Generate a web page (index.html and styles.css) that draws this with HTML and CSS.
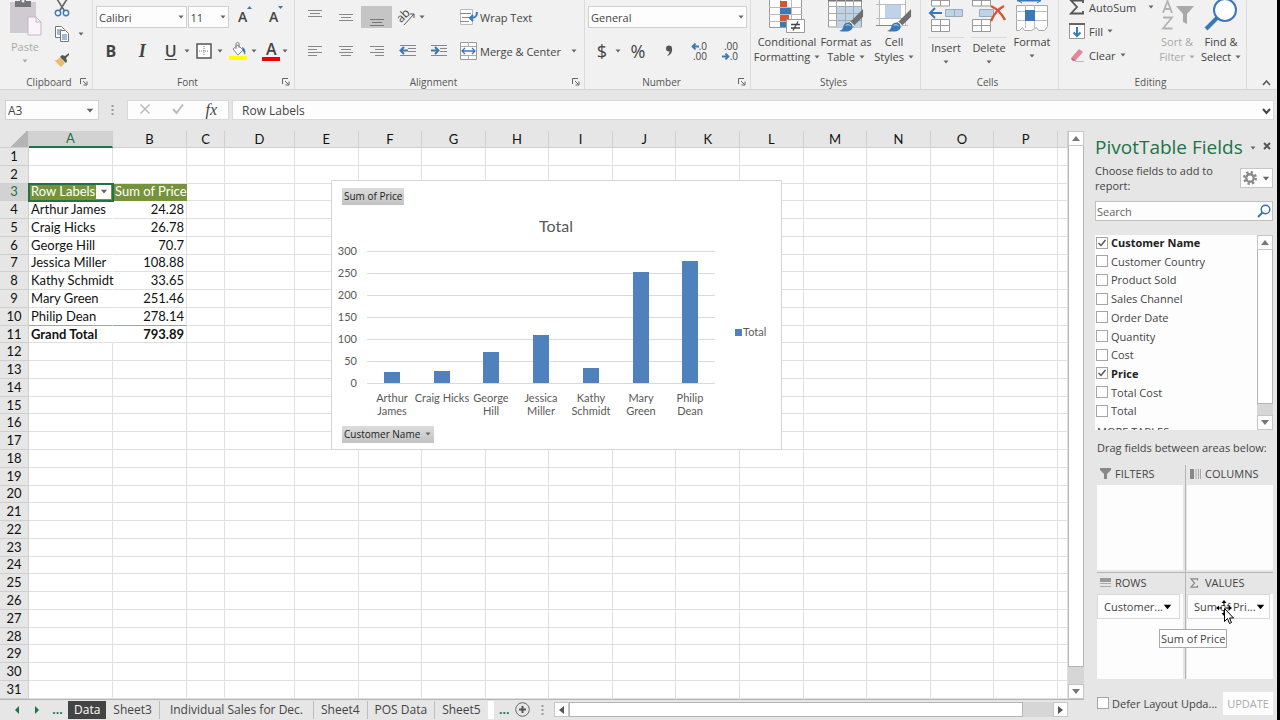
FILE: index.html
```html
<!DOCTYPE html>
<html lang="en">

<head>
    <meta charset="UTF-8">
    <meta name="viewport" content="width=device-width, initial-scale=1.0">
    <title>Pivot Chart</title>
    <link rel="stylesheet" href="styles.css">
</head>

<body>
    <svg class="defs" width="0" height="0" aria-hidden="true">
        <symbol id="caret" viewBox="0 0 6 4"><path d="M0.5 0.5h5L3 3.5z" fill="currentColor"/></symbol>
        <symbol id="launcher" viewBox="0 0 8 8"><path d="M0.5 6V0.5H6M3 3l3.5 3.5M7 3.5V7H3.5" fill="none" stroke="#666"/></symbol>
        <symbol id="brush" viewBox="0 0 26 26"><path d="M25 1v8l-9 9-4-4z" fill="#6f6f6f"/><path d="M12 14l4 4-2 2-4-4z" fill="#fff" stroke="#888" stroke-width=".6"/><path d="M10 15c3 0 5 3 4 6-2 4-8 4-14 3 4-1 4-3 5-6 1-2 3-3 5-3z" fill="#3b78b8"/><path d="M7 18c2-1 4-1 5 1" fill="none" stroke="#cfe0f2"/></symbol>
    </svg>

    <header class="ribbon">
        <section class="group clipboard">
            <div class="tools wide">
                <button class="big disabled paste">
                    <svg width="34" height="36" viewBox="0 0 34 36"><path d="M2 2h26v31H2z" fill="#cfcbd1"/><path d="M7 1h5V-2h6v3h5v6H7z" fill="#77757a"/><circle cx="15" cy="1" r="1.500" fill="#eee"/><path d="M20 17h8l5 5v13H20z" fill="#faf3fa" stroke="#c9b4c9"/><path d="M28 17v5h5" fill="none" stroke="#c9b4c9"/></svg>
                    <span>Paste</span>
                    <svg class="caret"><use href="#caret"/></svg>
                </button>
                <div class="stack">
                    <button aria-label="Cut"><svg width="16" height="18" viewBox="0 0 16 18"><path d="M3 0l7.500 12M13 0L5.500 12" stroke="#666" stroke-width="1.600" fill="none"/><circle cx="4" cy="14" r="2.700" fill="none" stroke="#3b78b8" stroke-width="1.400"/><circle cx="12" cy="14" r="2.700" fill="none" stroke="#3b78b8" stroke-width="1.400"/></svg></button>
                    <button aria-label="Copy"><svg width="16" height="18" viewBox="0 0 16 18"><path d="M1.500 1.500h6l3 3v8h-9z" fill="#fff" stroke="#777"/><path d="M3 5h5M3 7h5M3 9h3" stroke="#3b78b8"/><path d="M6.500 5.500h5l3 3v8h-8z" fill="#fff" stroke="#777"/><path d="M8 10h5M8 12h5M8 14h5" stroke="#3b78b8"/></svg><svg class="caret"><use href="#caret"/></svg></button>
                    <button aria-label="Format Painter"><svg width="16" height="14" viewBox="0 0 16 14"><path d="M15 0l-4 3-3-1-2 2 6 6 1-2-1-3 3-3z" fill="#555"/><path d="M6 4l5 6-4 4-7-7c3 1 4-1 6-3z" fill="#e8bd72"/></svg></button>
                </div>
            </div>
            <footer><span>Clipboard</span><svg class="launcher"><use href="#launcher"/></svg></footer>
        </section>

        <section class="group font">
            <div class="tools">
                <div class="row">
                    <select class="font-name" aria-label="Font"><option>Calibri</option></select>
                    <select class="font-size" aria-label="Font size"><option>11</option></select>
                    <button class="letter" aria-label="Increase font size">A<svg class="mark" width="5" height="3"><path d="M0 3L2.500 0 5 3z" fill="#3b78b8"/></svg></button>
                    <button class="letter" aria-label="Decrease font size">A<svg class="mark" width="5" height="3"><path d="M0 0h5L2.500 3z" fill="#3b78b8"/></svg></button>
                </div>
                <div class="row spaced">
                    <button class="glyph"><b>B</b></button>
                    <button class="glyph italic"><i>I</i></button>
                    <button class="split"><span class="ico glyph underline">U</span><svg class="caret"><use href="#caret"/></svg></button>
                    <button class="split" aria-label="Borders"><span class="ico"><svg width="16" height="16" viewBox="0 0 16 16"><rect x="1" y="1" width="14" height="14" fill="#fff" stroke="#555" stroke-width="1.500"/><path d="M8 3v10M3 8h10" stroke="#777" stroke-dasharray="1 1"/></svg></span><svg class="caret"><use href="#caret"/></svg></button>
                    <button class="split" aria-label="Fill color"><span class="ico"><svg width="18" height="18" viewBox="0 0 18 18"><path d="M4 7l5-4 5 5-5 5z" fill="#fff" stroke="#888"/><path d="M7 7V2c0-2 3-2 3 0v4" fill="none" stroke="#777"/><path d="M13 5c3 1 4 4 3 8l-2-4z" fill="#3b78b8"/><path d="M0 14h18v4H0z" fill="#ff0"/></svg></span><svg class="caret"><use href="#caret"/></svg></button>
                    <button class="split" aria-label="Font color"><span class="ico font-color">A</span><svg class="caret"><use href="#caret"/></svg></button>
                </div>
            </div>
            <footer><span>Font</span><svg class="launcher"><use href="#launcher"/></svg></footer>
        </section>

        <section class="group alignment">
            <div class="tools">
                <div class="cells">
                    <button aria-label="Top align"><svg width="16" height="22"><path d="M1 4.500h14M3 7.500h10M1 10.500h14" stroke="#888"/></svg></button>
                    <button aria-label="Middle align"><svg width="16" height="22"><path d="M1 8.500h14M3 11.500h10M1 14.500h14" stroke="#888"/></svg></button>
                    <button class="pressed" aria-label="Bottom align"><svg width="16" height="22"><path d="M1 13.500h14M3 16.500h10M1 19.500h14" stroke="#777"/></svg></button>
                    <button class="orient" aria-label="Orientation"><svg width="18" height="18" viewBox="0 0 18 18"><text x="-1" y="12" transform="rotate(-45 5 9)" font-size="12" fill="#444">ab</text><path d="M6 17L16 6M12 6h4v4" fill="none" stroke="#555"/></svg><svg class="caret"><use href="#caret"/></svg></button>
                    <button class="text-btn"><svg width="18" height="16" viewBox="0 0 18 16"><path d="M.5 .5h12v15H.5z" fill="#fff" stroke="#bbb"/><path d="M0 4.500h11M2 8.500h9M0 12.500h9" stroke="#888"/><path d="M17 3c0 5-2 6-6 6M13 6l-3 3 3 3" fill="none" stroke="#3b78b8" stroke-width="2"/></svg>Wrap Text</button>
                </div>
                <div class="cells">
                    <button aria-label="Align left"><svg width="16" height="14"><path d="M1 2.500h14M1 5.500h9M1 8.500h14M1 11.500h9" stroke="#888"/></svg></button>
                    <button aria-label="Center"><svg width="16" height="14"><path d="M1 2.500h14M3 5.500h10M1 8.500h14M3 11.500h10" stroke="#888"/></svg></button>
                    <button aria-label="Align right"><svg width="16" height="14"><path d="M1 2.500h14M6 5.500h9M1 8.500h14M6 11.500h9" stroke="#888"/></svg></button>
                    <button aria-label="Decrease indent"><svg width="18" height="14"><path d="M1 1.500h16M9 4.500h8M9 7.500h8M1 11.500h16" stroke="#888"/><path d="M9 6.500H2M5 3L1.500 6.500 5 10" fill="none" stroke="#3b78b8" stroke-width="2"/></svg></button>
                    <button aria-label="Increase indent"><svg width="18" height="14"><path d="M1 1.500h16M10 4.500h7M10 7.500h7M1 11.500h16" stroke="#888"/><path d="M1 6.500h7M5 3l3.500 3.500L5 10" fill="none" stroke="#3b78b8" stroke-width="2"/></svg></button>
                    <button class="text-btn"><svg width="18" height="18" viewBox="0 0 18 18"><path d="M.5 .5h16v17H.5z" fill="#fff" stroke="#999"/><path d="M.5 4.500h16M.5 13.500h16M8.500 0v4.500M8.500 13.500V18" stroke="#aaa"/><path d="M2 9h13M5 6L2 9l3 3M12 6l3 3-3 3" fill="none" stroke="#3b78b8" stroke-width="1.300"/></svg>Merge &amp; Center<svg class="caret far"><use href="#caret"/></svg></button>
                </div>
            </div>
            <footer><span>Alignment</span><svg class="launcher"><use href="#launcher"/></svg></footer>
        </section>

        <section class="group number">
            <div class="tools">
                <div class="row">
                    <select class="format" aria-label="Number format"><option>General</option></select>
                </div>
                <div class="row currency">
                    <button class="split"><span class="ico money">$</span><svg class="caret"><use href="#caret"/></svg></button>
                    <button class="money">%</button>
                    <button aria-label="Comma style"><svg width="8" height="12" viewBox="0 0 8 12"><circle cx="4" cy="3.500" r="3" fill="#555"/><path d="M7 3c.5 4-1 7-5 8 2-2 3-4 2.500-6z" fill="#555"/></svg></button>
                    <button class="decimals"><span><svg width="8" height="7"><path d="M8 3.500H2M4.500 .5l-3 3 3 3" fill="none" stroke="#3b78b8" stroke-width="1.800"/></svg>.0</span><span>.00</span></button>
                    <button class="decimals"><span>.00</span><span><svg width="8" height="7"><path d="M0 3.500h6M3.500 .5l3 3-3 3" fill="none" stroke="#3b78b8" stroke-width="1.800"/></svg>.0</span></button>
                </div>
            </div>
            <footer><span>Number</span><svg class="launcher"><use href="#launcher"/></svg></footer>
        </section>

        <section class="group styles">
            <div class="tools wide">
                <button class="big">
                    <svg width="36" height="34" viewBox="0 0 36 34"><path d="M.5 -5h32v32.500H.5z" fill="#fff" stroke="#999"/><path d="M0 7.500h33M0 14.500h33M0 21.500h33M11.500 0v27M22.500 0v27" stroke="#bbb"/><path d="M11 1h7v6h-7zM11 15h9v6h-9z" fill="#d65532"/><path d="M11 8h11v6H11zM11 22h6v5h-6z" fill="#3b78b8"/><path d="M17.500 19.500h18v13h-18z" fill="#fff" stroke="#999"/><path d="M22 24.500h9M22 28h9M29 21.500l-5 9" stroke="#444" stroke-width="1.300"/></svg>
                    <span>Conditional<br>Formatting <svg class="caret"><use href="#caret"/></svg></span>
                </button>
                <button class="big">
                    <svg width="36" height="34" viewBox="0 0 36 34"><path d="M.5 -5h33v32H.5z" fill="#fff" stroke="#999"/><path d="M9 6h24v21H9z" fill="#bdd3ea"/><path d="M0 0.500h34" stroke="#777" stroke-width="2"/><path d="M0 6.500h33M0 13.500h33M0 20.500h33M8.500 0v27M17.500 0v27M25.500 0v27" stroke="#aaa"/><use href="#brush" x="11" y="8" width="25" height="25"/></svg>
                    <span>Format as<br>Table <svg class="caret"><use href="#caret"/></svg></span>
                </button>
                <button class="big">
                    <svg width="36" height="34" viewBox="0 0 36 34"><path d="M3 0h26v25H3z" fill="#fff"/><path d="M9 5h16v13H9z" fill="#bdd3ea"/><path d="M3.500 0v26M0 25.500h32M0 4.500h29M0 18.500h29M29.500 0v25" stroke="#bbb"/><path d="M0 25.500h22" stroke="#888"/><use href="#brush" x="11" y="8" width="25" height="25"/></svg>
                    <span>Cell<br>Styles <svg class="caret"><use href="#caret"/></svg></span>
                </button>
            </div>
            <footer><span>Styles</span></footer>
        </section>

        <section class="group cellops">
            <div class="tools wide">
                <button class="big two-part">
                    <svg width="36" height="34" viewBox="0 0 36 34"><path d="M3.500 -4h18v10h-18zM3.500 19.500h18v12h-18z" fill="#fff" stroke="#999"/><path d="M3 .5h18M12.500 0v6M3 25.500h18M12.500 19v13" stroke="#999"/><path d="M17.500 9.500h17v7h-17z" fill="#bdd3ea" stroke="#9ab"/><path d="M26.500 9v8" stroke="#9ab"/><path d="M14 13H2M7 8l-5 5 5 5" fill="none" stroke="#3b78b8" stroke-width="2"/></svg>
                    <span>Insert</span>
                    <svg class="caret"><use href="#caret"/></svg>
                </button>
                <button class="big two-part">
                    <svg width="36" height="34" viewBox="0 0 36 34"><path d="M1.500 -4h18v10h-18zM1.500 19.500h18v12h-18z" fill="#fff" stroke="#999"/><path d="M1 .5h18M10.500 0v6M1 25.500h18M10.500 19v13" stroke="#999"/><path d="M8.500 9.500h14v7h-14z" fill="#bdd3ea" stroke="#9ab"/><path d="M20 6c6 3 11 8 14 14M33 6c-6 3-10 8-13 15" fill="none" stroke="#d65532" stroke-width="2.500"/></svg>
                    <span>Delete</span>
                    <svg class="caret"><use href="#caret"/></svg>
                </button>
                <button class="big">
                    <svg width="36" height="34" viewBox="0 0 36 34"><path d="M3 .5h24" stroke="#3b78b8" stroke-width="2"/><path d="M8 -2L5 1l3 2M23 -2l3 3-3 2" fill="none" stroke="#3b78b8"/><path d="M2.500 5.500h31v21l-3 4h-6l-2-3-5 3h-7l-2-3-3 3h-3z" fill="#fff" stroke="#aaa"/><path d="M2 11.500h31M2 20.500h31M11.500 5v23M20.500 5v23" stroke="#bbb"/><path d="M11 10h10v11H11z" fill="#3b78b8"/></svg>
                    <span>Format</span>
                    <svg class="caret"><use href="#caret"/></svg>
                </button>
            </div>
            <footer><span>Cells</span></footer>
        </section>

        <section class="group editing">
            <div class="tools wide">
                <div class="stack labelled">
                    <button><svg width="16" height="16" viewBox="0 0 16 16"><path d="M14 4V1.500H2L8 8l-6 6.500h12V12" fill="none" stroke="#555" stroke-width="1.800"/></svg>AutoSum<svg class="caret far"><use href="#caret"/></svg></button>
                    <button><svg width="16" height="16" viewBox="0 0 16 16"><path d="M.5 .5h15v15H.5z" fill="#fff" stroke="#999"/><path d="M0 1h16" stroke="#666" stroke-width="2"/><path d="M8 4v9M4.500 9.500L8 13l3.500-3.500" fill="none" stroke="#3b78b8" stroke-width="2"/></svg>Fill<svg class="caret"><use href="#caret"/></svg></button>
                    <button><svg width="16" height="16" viewBox="0 0 16 16"><path d="M10 2l4 3-7 8-4-3z" fill="#e7849c"/><path d="M3 10l4 3-1 1H4l-2-2z" fill="#d46a84"/><path d="M6 14.500h9" stroke="#bbb"/></svg>Clear<svg class="caret"><use href="#caret"/></svg></button>
                </div>
                <button class="big disabled">
                    <svg width="36" height="34" viewBox="0 0 36 34"><path d="M4 13L8.500 1 13 13M6 9h5M4 17.500h9L4 28.500h9.500" fill="none" stroke="#b3b3b3" stroke-width="1.800"/><path d="M17 6h18l-7 8v10l-4-2v-8z" fill="#a9a9a9"/></svg>
                    <span>Sort &amp;<br>Filter <svg class="caret"><use href="#caret"/></svg></span>
                </button>
                <button class="big">
                    <svg width="36" height="34" viewBox="0 0 36 34"><circle cx="22" cy="10" r="11" fill="#fff" stroke="#3b78b8" stroke-width="2"/><path d="M14 18L3 29" stroke="#3b78b8" stroke-width="4"/></svg>
                    <span>Find &amp;<br>Select <svg class="caret"><use href="#caret"/></svg></span>
                </button>
            </div>
            <footer><span>Editing</span></footer>
        </section>
        <button class="collapse" aria-label="Collapse the ribbon"><svg width="9" height="6"><path d="M1 5l3.500-4L8 5" fill="none" stroke="#555" stroke-width="1.500"/></svg></button>
    </header>

    <div class="formula-bar">
        <select class="name-box" aria-label="Name box"><option>A3</option></select>
        <svg class="dots" width="3" height="12"><path d="M1.500 1v10" stroke="#999" stroke-width="2" stroke-dasharray="2 2"/></svg>
        <div class="fx-box">
            <button aria-label="Cancel"><svg width="12" height="12"><path d="M1.500 1.500l9 9M10.500 1.500l-9 9" stroke="#bbb" stroke-width="1.500"/></svg></button>
            <button aria-label="Enter"><svg width="12" height="12"><path d="M1 6l3.500 4L11 1.500" fill="none" stroke="#bbb" stroke-width="2"/></svg></button>
            <button class="fx">fx</button>
        </div>
        <div class="formula">
            <input type="text" value="Row Labels" aria-label="Formula">
            <button aria-label="Expand formula bar"><svg width="9" height="7"><path d="M1 1l3.500 4L8 1" fill="none" stroke="#444" stroke-width="2"/></svg></button>
        </div>
    </div>

    <main>
        <div class="workbook">
            <div class="sheet-area">
                <div class="sheet">
                    <table>
                        <colgroup>
                            <col class="col-num"><col class="col-a"><col class="col-b"><col class="col-c"><col class="col-d">
                            <col span="12">
                            <col class="col-last">
                        </colgroup>
                        <thead id="columns"></thead>
                        <tbody id="rows"></tbody>
                    </table>

                    <figure class="chart">
                        <button class="field-button">Sum of Price</button>
                        <svg viewBox="0 0 447 212" role="img" aria-label="Total by customer">
                            <text class="chart-title" x="223" y="22">Total</text>
                            <g id="plot"></g>
                            <rect class="bar" x="402" y="119" width="7" height="7"/>
                            <text x="410" y="126">Total</text>
                        </svg>
                        <button class="field-button">Customer Name <svg class="caret"><use href="#caret"/></svg></button>
                    </figure>
                </div>
                <div class="scroll vertical">
                    <button aria-label="Scroll up"><svg width="8" height="5"><path d="M0 5l4-5 4 5z" fill="#777"/></svg></button>
                    <div class="thumb"></div>
                    <button aria-label="Scroll down"><svg width="8" height="5"><path d="M0 0h8L4 5z" fill="#777"/></svg></button>
                </div>
            </div>

            <nav class="tabs">
                <button class="arrow" aria-label="Previous sheet"><svg width="4" height="8"><path d="M4 0v8L0 4z" fill="#217346"/></svg></button>
                <button class="arrow" aria-label="Next sheet"><svg width="4" height="8"><path d="M0 0v8l4-4z" fill="#217346"/></svg></button>
                <button class="more">...</button>
                <button class="tab active">Data</button>
                <button class="tab">Sheet3</button>
                <button class="tab long">Individual Sales for Dec.</button>
                <button class="tab">Sheet4</button>
                <button class="tab">POS Data</button>
                <button class="tab last">Sheet5</button>
                <button class="more">...</button>
                <button class="add" aria-label="New sheet"><svg width="15" height="15"><circle cx="7.500" cy="7.500" r="6.800" fill="none" stroke="#666"/><path d="M7.500 4v7M4 7.500h7" stroke="#555" stroke-width="2"/></svg></button>
                <svg class="dots" width="3" height="12"><path d="M1.500 1v10" stroke="#999" stroke-width="2" stroke-dasharray="2 2"/></svg>
                <div class="scroll horizontal">
                    <button aria-label="Scroll left"><svg width="5" height="8"><path d="M5 0v8L0 4z" fill="#555"/></svg></button>
                    <div class="thumb"></div>
                    <button aria-label="Scroll right"><svg width="5" height="8"><path d="M0 0v8l5-4z" fill="#555"/></svg></button>
                </div>
            </nav>
        </div>

        <aside class="pane">
            <div class="pane-title">
                <h1>PivotTable Fields</h1>
                <button aria-label="Pane options"><svg class="caret"><use href="#caret"/></svg></button>
                <button aria-label="Close"><svg width="8" height="8"><path d="M1 1l6 6M7 1L1 7" stroke="#555" stroke-width="2"/></svg></button>
            </div>
            <div class="choose">
                <p>Choose fields to add to report:</p>
                <button class="gear" aria-label="Tools"><svg width="14" height="14" viewBox="0 0 12 12"><circle cx="6" cy="6" r="5" fill="none" stroke="#888" stroke-width="2" stroke-dasharray="2 1.927"/><circle cx="6" cy="6" r="3.200" fill="none" stroke="#888" stroke-width="2"/></svg><svg class="caret"><use href="#caret"/></svg></button>
            </div>
            <div class="search">
                <input type="text" placeholder="Search" aria-label="Search fields">
                <svg width="14" height="14" viewBox="0 0 14 14"><circle cx="8.500" cy="5.500" r="4.300" fill="#fff" stroke="#3b6fae" stroke-width="1.400"/><path d="M5.500 8.500L1 13" stroke="#3b6fae" stroke-width="1.800"/></svg>
            </div>
            <div class="field-list">
                <div class="fields">
                    <ul>
                        <li><label class="used"><input type="checkbox" checked>Customer Name</label></li>
                        <li><label><input type="checkbox">Customer Country</label></li>
                        <li><label><input type="checkbox">Product Sold</label></li>
                        <li><label><input type="checkbox">Sales Channel</label></li>
                        <li><label><input type="checkbox">Order Date</label></li>
                        <li><label><input type="checkbox">Quantity</label></li>
                        <li><label><input type="checkbox">Cost</label></li>
                        <li><label class="used"><input type="checkbox" checked>Price</label></li>
                        <li><label><input type="checkbox">Total Cost</label></li>
                        <li><label><input type="checkbox">Total</label></li>
                    </ul>
                    <a class="more-tables" href="#">MORE TABLES</a>
                </div>
                <div class="scroll vertical">
                    <button aria-label="Scroll up"><svg width="8" height="5"><path d="M0 5l4-5 4 5z" fill="#777"/></svg></button>
                    <div class="thumb"></div>
                    <button aria-label="Scroll down"><svg width="8" height="5"><path d="M0 0h8L4 5z" fill="#777"/></svg></button>
                </div>
            </div>
            <p class="hint">Drag fields between areas below:</p>
            <div class="areas">
                <section>
                    <h2><svg width="11" height="11"><path d="M0 0h11v2L7 6v5H4V6L0 2z" fill="#888"/></svg>FILTERS</h2>
                    <div class="drop"></div>
                </section>
                <section>
                    <h2><svg width="11" height="10"><path d="M0 0h4v10H0z" fill="#888"/><path d="M6 0v10M8.500 0v10M10.500 0v10" stroke="#aaa"/></svg>COLUMNS</h2>
                    <div class="drop"></div>
                </section>
                <section>
                    <h2><svg width="11" height="9"><path d="M0 0h11v4H0z" fill="#999"/><path d="M0 5.500h11M0 8.500h11" stroke="#aaa"/></svg>ROWS</h2>
                    <div class="drop"><button class="pill">Customer...<svg class="caret"><use href="#caret"/></svg></button></div>
                </section>
                <section class="values">
                    <h2><svg width="11" height="10" viewBox="0 0 11 10"><path d="M7.500 2.500V.8H1L4.500 5 1 9.200h6.500V7.500" fill="none" stroke="#888" stroke-width="1.200"/></svg>VALUES</h2>
                    <div class="drop"><button class="pill">Sum of Pri...<svg class="caret"><use href="#caret"/></svg></button></div>
                    <div class="tooltip">Sum of Price</div>
                    <svg class="cursor" width="18" height="26" viewBox="0 0 18 26"><path d="M8 1v14M1 8h14" stroke="#000" stroke-dasharray="5 4"/><path d="M8 0l2.500 3h-5zM8 16l2.500-3h-5zM0 8l3-2.500v5zM16 8l-3-2.500v5z" fill="#000"/><path d="M8.500 8.500v13l3-3 2 5 2-1-2-4.500h4z" fill="#fff" stroke="#000"/></svg>
                </section>
            </div>
            <div class="pane-footer">
                <label><input type="checkbox">Defer Layout Upda...</label>
                <button disabled>UPDATE</button>
            </div>
        </aside>
    </main>

    <script>
        const columns = 'ABCDEFGHIJKLMNOP'.split('');
        const customers = [
            ['Arthur James', 24.28],
            ['Craig Hicks', 26.78],
            ['George Hill', 70.7],
            ['Jessica Miller', 108.88],
            ['Kathy Schmidt', 33.65],
            ['Mary Green', 251.46],
            ['Philip Dean', 278.14]
        ];

        // column letters
        let head = '<tr><th class="corner"></th>';
        columns.forEach(c => head += `<th class="${c === 'A' ? 'selected' : ''}">${c}</th>`);
        document.getElementById('columns').innerHTML = head + '<th></th></tr>';

        // sheet rows, the pivot table starts on row 3
        function pivotCells(row) {
            if (row === 3) {
                return '<td class="pivot-head current"><span>Row Labels</span><button aria-label="Filter"><svg class="caret"><use href="#caret"/></svg></button></td><td class="pivot-head">Sum of Price</td>';
            }
            if (row > 3 && row < 11) {
                const [name, price] = customers[row - 4];
                const cls = row === 10 ? ' last' : '';
                return `<td class="pivot${cls}">${name}</td><td class="pivot num${cls}">${price}</td>`;
            }
            if (row === 11) return '<td class="total">Grand Total</td><td class="total num">793.89</td>';
            return '<td></td><td></td>';
        }

        let body = '';
        for (let r = 1; r <= 31; r++) {
            body += `<tr><th class="${r === 3 ? 'selected' : ''}">${r}</th>${pivotCells(r)}${'<td></td>'.repeat(15)}</tr>`;
        }
        document.getElementById('rows').innerHTML = body;

        // chart
        const base = 173;
        const scale = 132 / 300;
        let plot = '';
        for (let v = 0; v <= 300; v += 50) {
            const y = Math.round(base - v * scale);
            plot += `<path class="grid-line" d="M34 ${y}.5H382"/><text class="axis" x="24" y="${y + 4}">${v}</text>`;
        }
        customers.forEach(([name, price], i) => {
            const x = Math.round(59 + i * 49.7);
            const h = Math.round(price * scale);
            plot += `<rect class="bar" x="${x - 8}" y="${base - h}" width="16" height="${h}"/>`;
            const lines = name === 'Craig Hicks' ? [name] : name.split(' ');
            lines.forEach((t, n) => plot += `<text class="category" x="${x}" y="${base + 19 + n * 13}">${t}</text>`);
        });
        document.getElementById('plot').innerHTML = plot;
    </script>
</body>

</html>
```
FILE: styles.css
```css
* {
    box-sizing: border-box;
}

body {
    margin: 0;
    height: 100vh;
    display: flex;
    flex-direction: column;
    overflow: hidden;
    border-right: 3px solid #000;
    background: #e6e6e6;
    color: #444;
    font-family: "Open Sans", "Noto Sans", sans-serif;
    font-size: 12px;
}

button,
input,
select {
    font: inherit;
    color: inherit;
    margin: 0;
    padding: 0;
    border: 0;
    border-radius: 0;
    background: none;
}

svg {
    flex: none;
}

.defs {
    position: absolute;
}

.caret {
    width: 6px;
    height: 4px;
    color: #666;
}

/* ribbon */
.ribbon {
    flex: none;
    display: flex;
    height: 90px;
    background: #f1f1f1;
    border-bottom: 1px solid #d4d4d4;
    font-size: 11px;
}

.group {
    display: flex;
    flex-direction: column;
    flex: none;
    border-right: 1px solid #dcdcdc;
}

.clipboard { width: 93px; }
.font { width: 202px; }
.alignment { width: 290px; }
.number { width: 166px; }
.styles { width: 170px; }
.cellops { width: 138px; }
.editing { width: 188px; }

.group footer {
    display: flex;
    align-items: center;
    height: 14px;
    padding-right: 4px;
    font-size: 10px;
    line-height: 14px;
    color: #555;
}

.group footer span {
    flex: 1;
    text-align: center;
}

.clipboard footer {
    padding-left: 18px;
}

.launcher {
    width: 8px;
    height: 8px;
}

.tools {
    display: flex;
    flex-direction: column;
    gap: 12px;
    height: 75px;
    padding: 6px 3px 0;
}

.tools.wide {
    flex-direction: row;
    gap: 0;
    padding: 0;
}

.tools button {
    display: flex;
    align-items: center;
    justify-content: center;
}

.row {
    display: flex;
    gap: 1px;
    height: 22px;
}

.row button {
    width: 30px;
}

.row.spaced {
    gap: 2px;
}

.row.currency {
    padding-left: 2px;
}

select {
    appearance: none;
    height: 22px;
    padding: 0 2px;
    border: 1px solid #d0d0d0;
    background: #fdfdfd url('data:image/svg+xml,<svg xmlns="http://www.w3.org/2000/svg" width="6" height="4"><path d="M.5 .5h5L3 3.500z" fill="%23666"/></svg>') no-repeat right 2px center;
}

.font-name { width: 91px; }
.font-size { width: 42px; }

.format {
    flex: 1;
}

.row .letter {
    align-items: flex-start;
    font-size: 14px;
    font-weight: 600;
    line-height: 22px;
}

.glyph {
    font-size: 16px;
}

.italic {
    font-family: "Liberation Serif", serif;
    font-size: 18px;
    font-weight: bold;
}

.underline {
    font-weight: 600;
    text-decoration: underline;
    text-underline-offset: 2px;
}

.row .split {
    width: 32px;
}

.ico {
    display: flex;
    justify-content: center;
    align-items: center;
    width: 22px;
    margin-right: 2px;
}

.font-color {
    width: 18px;
    height: 19px;
    font-size: 16px;
    font-weight: 600;
    border-bottom: 4px solid #e00;
}

.cells {
    display: grid;
    grid-template-columns: repeat(5, 31px) 1fr;
    height: 22px;
    padding-left: 1px;
}

.pressed {
    background: #c5c5c5;
}

.cells .orient {
    grid-column: span 2;
    justify-self: start;
    gap: 3px;
    padding-left: 6px;
}

.orient svg {
    overflow: visible;
}

.alignment .text-btn {
    justify-content: flex-start;
    gap: 2px;
    padding-left: 6px;
    white-space: nowrap;
}

.far {
    margin-left: 8px;
}

.money {
    font-size: 18px;
}

.row .decimals {
    flex-direction: column;
    align-items: flex-end;
    padding-right: 8px;
    font-size: 10px;
    line-height: 10px;
}

.big {
    flex-direction: column;
    flex: none;
    line-height: 15px;
    white-space: nowrap;
}

.tools .big {
    justify-content: flex-start;
}

.styles .tools {
    padding: 0 3px;
}

.styles .big:nth-child(1) { width: 66px; }
.styles .big:nth-child(2) { width: 52px; }
.styles .big:nth-child(3) { width: 44px; }

.big .caret {
    margin-top: 5px;
}

.big span .caret {
    margin: 0 0 2px 1px;
}

.cellops .tools {
    padding: 0 4px;
    gap: 1px;
}

.cellops .big {
    width: 42px;
}

.two-part span {
    width: 36px;
    margin-top: 3px;
    padding-top: 2px;
    border-top: 1px solid #dadada;
}

.paste {
    width: 50px;
}

.paste span {
    margin-top: 3px;
}

.disabled,
.disabled .caret {
    color: #aaa;
}

.stack {
    display: flex;
    flex-direction: column;
    justify-content: flex-end;
    height: 73px;
    overflow: hidden;
}

.stack button {
    flex: none;
    justify-content: flex-start;
    gap: 8px;
    height: 26px;
    padding-left: 4px;
}

.labelled {
    width: 96px;
    height: 67px;
}

.labelled button {
    gap: 4px;
    height: 24px;
    padding-left: 10px;
}

.editing .big {
    width: 44px;
}

.collapse {
    align-self: flex-end;
    width: 30px;
    height: 16px;
    padding-left: 8px;
}

/* formula bar */
.formula-bar {
    flex: none;
    display: flex;
    align-items: center;
    height: 41px;
    padding: 0 3px 1px 5px;
}

.name-box {
    width: 94px;
    height: 20px;
    background-position: right 4px center;
    background-size: 8px 5px;
}

.formula-bar .dots {
    margin: 0 13px 0 12px;
}

.fx-box {
    display: flex;
    width: 102px;
    height: 20px;
    margin-right: 3px;
    background: #fdfdfd;
    border: 1px solid #d9d9d9;
}

.fx-box button {
    flex: 1;
}

.fx {
    font-family: "Liberation Serif", serif;
    font-size: 16px;
    font-style: italic;
    line-height: 16px;
}

.formula {
    flex: 1;
    display: flex;
    height: 20px;
    background: #fdfdfd;
    border: 1px solid #d9d9d9;
}

.formula input {
    flex: 1;
    padding: 0 9px;
}

.formula button {
    width: 14px;
}

/* sheet */
main {
    flex: 1;
    display: flex;
    min-height: 0;
}

.workbook {
    flex: 1;
    display: flex;
    flex-direction: column;
    min-width: 0;
}

.sheet-area {
    flex: 1;
    display: flex;
    min-height: 0;
}

.sheet {
    position: relative;
    flex: 1;
    min-width: 0;
    background: #fff;
}

table {
    width: 100%;
    height: 100%;
    table-layout: fixed;
    border-spacing: 0;
    font-family: Lato, "Open Sans", sans-serif;
    font-size: 13px;
    line-height: 15px;
    color: #111;
}

.col-num { width: 29px; }
.col-a { width: 84px; }
.col-b { width: 74px; }
.col-c { width: 38px; }
.col-d { width: 70px; }
.col-last { width: 10px; }

th,
td {
    padding: 0 2px;
    border-right: 1px solid #e0e0e0;
    border-bottom: 1px solid #e0e0e0;
    white-space: nowrap;
}

th {
    padding: 0;
    font-weight: normal;
    background: #e6e6e6;
    border-color: #cfcfcf;
}

thead th {
    height: 17px;
}

.corner {
    background: linear-gradient(135deg, #e6e6e6 60%, #b5b5b5 60%);
}

.selected {
    background: #d2d2d2;
    color: #217346;
}

thead .selected {
    border-bottom: 2px solid #217346;
}

.pivot-head {
    padding: 0 1px 0 2px;
    background: #76933c;
    color: #fff;
    border-color: #76933c;
}

.current {
    position: relative;
    outline: 2px solid #217346;
    outline-offset: -1px;
}

.current button {
    position: absolute;
    top: 1px;
    right: 1px;
    bottom: 1px;
    width: 15px;
    background: #fff;
    line-height: 8px;
}

.current .caret,
.gear .caret {
    width: 8px;
    height: 5px;
}

.current .caret {
    margin-bottom: 2px;
}

.pivot,
.total {
    border-right-color: #fff;
}

.num {
    text-align: right;
    border-right-color: #e0e0e0;
}

.last {
    border-bottom-color: #9bb36c;
}

.total {
    font-weight: bold;
}

/* chart floats over the cells */
.chart {
    position: absolute;
    left: 331px;
    top: 49px;
    width: 451px;
    height: 270px;
    margin: 0;
    padding: 7px 1px 6px;
    display: flex;
    flex-direction: column;
    align-items: flex-start;
    justify-content: space-between;
    background: #fff;
    border: 1px solid #d6d6d6;
    font-family: Lato, "Open Sans", sans-serif;
}

.chart > svg {
    width: 100%;
    height: 212px;
    font-size: 11px;
    fill: #595959;
}

.chart-title {
    font-size: 16px;
    text-anchor: middle;
}

.grid-line {
    stroke: #d9d9d9;
}

.axis {
    text-anchor: end;
}

.category {
    text-anchor: middle;
}

.bar {
    fill: #4f81bd;
}

.field-button {
    height: 17px;
    margin-left: 9px;
    padding: 0 2px;
    background: linear-gradient(#dcdcdc, #c2c2c2);
    font-family: "Open Sans", sans-serif;
    font-size: 10px;
    line-height: 17px;
    color: #222;
}

.field-button .caret {
    margin: 0 1px 2px 2px;
}

/* scroll bars */
.scroll {
    display: flex;
    background: #d6d6d6;
}

.scroll button {
    display: flex;
    align-items: center;
    justify-content: center;
    background: #fdfdfd;
    border: 1px solid #c6c6c6;
}

.vertical {
    flex: none;
    flex-direction: column;
    width: 16px;
}

.vertical button {
    height: 15px;
}

.thumb {
    flex: 1;
    background: #fff;
    border: 1px solid #b5b5b5;
}

.vertical .thumb {
    margin-bottom: 17px;
    border-top: 0;
}

.field-list .thumb {
    margin-bottom: 11px;
}

/* sheet tabs */
.tabs {
    flex: none;
    display: flex;
    align-items: center;
    height: 21px;
    padding: 0 0 1px 7px;
    border-top: 1px solid #b5b5b5;
}

.arrow {
    width: 20px;
}

.more {
    width: 21px;
    font-weight: bold;
    color: #217346;
}

.tab {
    height: 18px;
    padding: 0 7px;
    line-height: 16px;
    border-right: 1px solid #bdbdbd;
    white-space: nowrap;
}

.long {
    padding: 0 10px;
}

.active {
    padding: 0 6px;
    background: #444;
    color: #fff;
    border: 0;
}

.tab.last {
    border-right: 6px solid #fff;
}

.add {
    height: 15px;
    margin-right: 11px;
}

.horizontal {
    flex: 1;
    height: 15px;
    margin: 0 16px 0 10px;
}

.horizontal button {
    width: 15px;
}

.horizontal .thumb {
    margin-right: 30px;
}

/* field pane */
.pane {
    flex: none;
    display: flex;
    flex-direction: column;
    width: 193px;
    padding: 0 4px 0 11px;
    font-size: 11px;
}

.pane-title {
    display: flex;
    align-items: center;
    height: 32px;
}

h1 {
    flex: 1;
    margin: 0;
    font-size: 19px;
    font-weight: normal;
    color: #217346;
    white-space: nowrap;
}

.pane-title button {
    width: 15px;
    padding: 0 2px 4px 0;
    text-align: right;
}

.choose {
    display: flex;
    align-items: center;
    justify-content: space-between;
    height: 30px;
}

.choose p {
    width: 132px;
    margin: 0;
    line-height: 15px;
}

.gear {
    display: flex;
    align-items: center;
    justify-content: center;
    gap: 5px;
    width: 33px;
    height: 20px;
    background: #fdfdfd;
    border: 1px solid #c6c6c6;
}

.search {
    display: flex;
    align-items: center;
    height: 20px;
    margin: 8px 0 14px;
    padding-right: 1px;
    background: #fdfdfd;
    border: 1px solid #c0c0c0;
}

.search input {
    flex: 1;
    min-width: 0;
    padding-left: 1px;
}

.search input::placeholder {
    color: #666;
}

.field-list {
    display: flex;
    height: 195px;
    overflow: hidden;
    background: #fdfdfd;
}

.fields {
    flex: 1;
    overflow: hidden;
}

.field-list ul {
    display: grid;
    grid-auto-rows: 1fr;
    height: 187px;
    margin: 0;
    padding: 0;
    list-style: none;
}

label {
    display: flex;
    align-items: center;
    gap: 3px;
    white-space: nowrap;
}

.used {
    font-weight: bold;
    color: #222;
}

input[type="checkbox"] {
    appearance: none;
    width: 12px;
    height: 12px;
    margin-left: 1px;
    background: #fff;
    border: 1px solid #a5a5a5;
}

input[type="checkbox"]:checked {
    background: #fff url('data:image/svg+xml,<svg xmlns="http://www.w3.org/2000/svg" width="8" height="8"><path d="M.5 4L3 6.500 7.500 1" fill="none" stroke="%23555" stroke-width="1.500"/></svg>') no-repeat center;
}

.more-tables {
    display: block;
    padding-left: 2px;
    line-height: 20px;
    color: #444;
    text-decoration: none;
}

.hint {
    margin: 0;
    padding-left: 2px;
    line-height: 35px;
    white-space: nowrap;
}

.areas {
    flex: 1;
    display: grid;
    grid-template-columns: 1fr 1fr;
    grid-template-rows: 1fr 1fr;
    row-gap: 4px;
    margin-left: 2px;
    background: linear-gradient(#b5b5b5, #b5b5b5) no-repeat center / 1px 100%, linear-gradient(#b5b5b5, #b5b5b5) no-repeat center / 100% 1px;
}

.areas section {
    display: flex;
    flex-direction: column;
    min-width: 0;
    margin-right: 2px;
}

.areas section:nth-child(even) {
    margin: 0 0 0 2px;
}

.areas h2 {
    display: flex;
    align-items: center;
    gap: 4px;
    height: 20px;
    margin: 0;
    padding: 0 0 3px 3px;
    font-size: 11px;
    font-weight: normal;
}

.drop {
    flex: 1;
    background: #fdfdfd;
}

.pill {
    display: flex;
    align-items: center;
    justify-content: space-between;
    width: 97%;
    height: 25px;
    padding: 0 7px 0 6px;
    background: #fdfdfd;
    border: 1px solid #d9d9d9;
    white-space: nowrap;
}

.pill .caret {
    width: 9px;
    height: 6px;
    color: #000;
}

.areas .values {
    position: relative;
}

.tooltip {
    position: absolute;
    left: -28px;
    top: 55px;
    padding: 0 1px;
    line-height: 17px;
    background: #fff;
    border: 1px solid #aaa;
    white-space: nowrap;
}

.cursor {
    position: absolute;
    left: 29px;
    top: 26px;
}

.pane-footer {
    display: flex;
    align-items: center;
    justify-content: space-between;
    height: 34px;
    margin-top: 7px;
    padding-left: 1px;
}

.pane-footer button {
    width: 50px;
    height: 23px;
    background: #fdfdfd;
    color: #aaa;
}
```
